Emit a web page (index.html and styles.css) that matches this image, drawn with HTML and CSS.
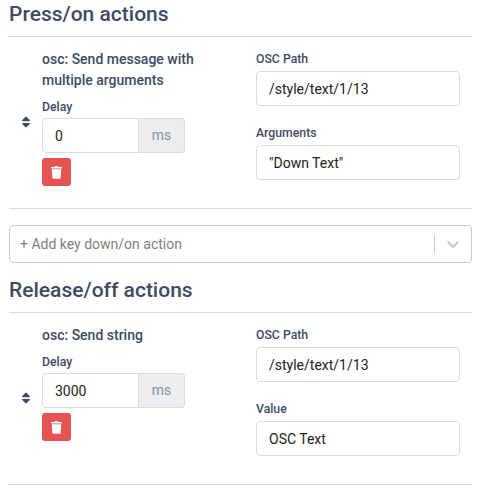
FILE: index.html
```html
<!DOCTYPE html>
<html lang="en">
<head>
    <meta charset="UTF-8">
    <title>Button actions</title>
    <link rel="stylesheet" href="styles.css">
</head>
<body>
    <div class="page">
        <h4>Press/on actions</h4>
        <hr>
        <div class="action">
            <div class="handle">
                <svg class="sort-icon" viewBox="0 0 320 512"><path d="M41 288h238c21.4 0 32.1 25.9 17 41L177 448c-9.4 9.4-24.6 9.4-33.9 0L24 329c-15.1-15.1-4.4-41 17-41zm255-105L177 64c-9.4-9.4-24.6-9.4-33.9 0L24 183c-15.1 15.1-4.4 41 17 41h238c21.4 0 32.1-25.9 17-41z"/></svg>
            </div>
            <div class="action-info">
                <div class="action-title">osc: Send message with multiple arguments</div>
                <label class="delay-label">Delay</label>
                <div class="input-group">
                    <input class="input delay-input" type="text" value="0">
                    <span class="addon">ms</span>
                </div>
                <button class="delete-btn">
                    <svg class="trash-icon" viewBox="0 0 448 512"><path d="M432 32H312l-9.4-18.7A24 24 0 0 0 281.1 0H166.8a23.72 23.72 0 0 0-21.4 13.3L136 32H16A16 16 0 0 0 0 48v32a16 16 0 0 0 16 16h416a16 16 0 0 0 16-16V48a16 16 0 0 0-16-16zM53.2 467a48 48 0 0 0 47.9 45h245.8a48 48 0 0 0 47.9-45L416 128H32z"/></svg>
                </button>
            </div>
            <div class="action-options">
                <div class="form-group">
                    <label>OSC Path</label>
                    <input class="input" type="text" value="/style/text/1/13">
                </div>
                <div class="form-group">
                    <label>Arguments</label>
                    <input class="input" type="text" value="&quot;Down Text&quot;">
                </div>
            </div>
        </div>
        <hr>
        <div class="select">
            <div class="select-placeholder">+ Add key down/on action</div>
            <span class="select-separator"></span>
            <svg class="select-arrow" viewBox="0 0 20 20"><path d="M4.516 7.548c0.436-0.446 1.043-0.481 1.576 0l3.908 3.747 3.908-3.747c0.533-0.481 1.141-0.446 1.576 0 0.436 0.445 0.408 1.197 0 1.615-0.406 0.418-4.695 4.502-4.695 4.502-0.217 0.223-0.502 0.335-0.789 0.335s-0.572-0.112-0.79-0.335c0 0-4.287-4.084-4.695-4.502s-0.436-1.17 0-1.615z"/></svg>
        </div>
        <h4>Release/off actions</h4>
        <hr>
        <div class="action">
            <div class="handle">
                <svg class="sort-icon" viewBox="0 0 320 512"><path d="M41 288h238c21.4 0 32.1 25.9 17 41L177 448c-9.4 9.4-24.6 9.4-33.9 0L24 329c-15.1-15.1-4.4-41 17-41zm255-105L177 64c-9.4-9.4-24.6-9.4-33.9 0L24 183c-15.1 15.1-4.4 41 17 41h238c21.4 0 32.1-25.9 17-41z"/></svg>
            </div>
            <div class="action-info">
                <div class="action-title">osc: Send string</div>
                <label class="delay-label">Delay</label>
                <div class="input-group">
                    <input class="input delay-input" type="text" value="3000">
                    <span class="addon">ms</span>
                </div>
                <button class="delete-btn">
                    <svg class="trash-icon" viewBox="0 0 448 512"><path d="M432 32H312l-9.4-18.7A24 24 0 0 0 281.1 0H166.8a23.72 23.72 0 0 0-21.4 13.3L136 32H16A16 16 0 0 0 0 48v32a16 16 0 0 0 16 16h416a16 16 0 0 0 16-16V48a16 16 0 0 0-16-16zM53.2 467a48 48 0 0 0 47.9 45h245.8a48 48 0 0 0 47.9-45L416 128H32z"/></svg>
                </button>
            </div>
            <div class="action-options">
                <div class="form-group">
                    <label>OSC Path</label>
                    <input class="input" type="text" value="/style/text/1/13">
                </div>
                <div class="form-group">
                    <label>Value</label>
                    <input class="input" type="text" value="OSC Text">
                </div>
            </div>
        </div>
        <hr>
    </div>
</body>
</html>
```

FILE: styles.css
```css
* {
    box-sizing: border-box;
}
body {
    margin: 0;
    background-color: #fff;
    font-family: Roboto, "Liberation Sans", sans-serif;
    font-size: 14px;
    line-height: 21px;
    color: #3c4b64;
}
.page {
    padding: 2px 10px 0 9px;
}
h4 {
    margin: 15px 0 9px;
    font-size: 21px;
    font-weight: 500;
    line-height: 25px;
}
h4:first-child {
    margin-top: 0;
}
hr {
    margin: 0;
    border: 0;
    border-top: 1px solid #d8dbe0;
}
.action {
    display: grid;
    grid-template-columns: 33px 214px 204px;
    padding-top: 11px;
}
.handle {
    display: flex;
    align-items: center;
    justify-content: center;
    padding-bottom: 13px;
}
.sort-icon {
    width: 10px;
    height: 14px;
    fill: #3c4b64;
}
.action-info {
    padding-right: 29px;
}
.action-title {
    padding-top: 1px;
    margin-bottom: 5px;
    font-weight: 500;
}
label {
    display: block;
    padding-top: 1px;
    margin-bottom: 1px;
    font-size: 12.25px;
    font-weight: 500;
}
.delay-label {
    margin-bottom: 0;
}
.form-group {
    margin-bottom: 16px;
}
.action-options {
    padding-bottom: 12px;
}
.input {
    display: block;
    width: 100%;
    height: 35px;
    padding: 6px 12px;
    border: 1px solid #d8dbe0;
    border-radius: 4px;
    background-color: #fff;
    font-family: inherit;
    font-size: 14px;
    color: #222;
}
.input-group {
    display: flex;
    width: 143px;
}
.delay-input {
    flex: 1;
    min-width: 0;
    border-radius: 4px 0 0 4px;
}
.addon {
    display: flex;
    align-items: center;
    justify-content: center;
    width: 46px;
    border: 1px solid #d8dbe0;
    border-left: 0;
    border-radius: 0 4px 4px 0;
    background-color: #ebedef;
    color: #8a93a2;
}
.delete-btn {
    display: flex;
    align-items: center;
    justify-content: center;
    width: 29px;
    height: 28px;
    margin-top: 5px;
    padding: 0;
    border: 0;
    border-radius: 3px;
    background-color: #e55353;
}
.trash-icon {
    width: 11px;
    height: 13px;
    fill: #fff;
}
.select {
    display: flex;
    align-items: center;
    height: 38px;
    margin-top: 16px;
    padding-left: 10px;
    border: 1px solid #ccc;
    border-radius: 4px;
}
.select-placeholder {
    flex: 1;
    color: #808080;
}
.select-separator {
    width: 1px;
    height: 20px;
    background-color: #ccc;
}
.select-arrow {
    width: 20px;
    height: 20px;
    margin: 0 8px;
    fill: #ccc;
}
```
